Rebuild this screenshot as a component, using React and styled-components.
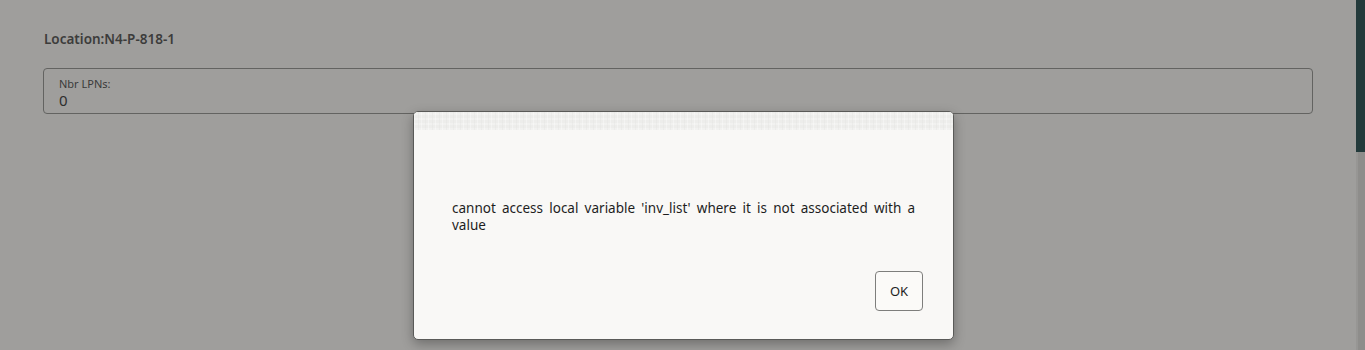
import React from 'react';
import styled, { createGlobalStyle } from 'styled-components';

const GlobalStyle = createGlobalStyle`
  html, body {
    margin: 0;
    padding: 0;
    height: 100%;
    overflow: hidden;
  }
  body {
    background: #9f9e9c;
    font-family: "Noto Sans", "Open Sans", sans-serif;
  }
`;

const Page = styled.div`
  position: relative;
  width: 1365px;
  height: 350px;
  display: flex;
`;

const Content = styled.main`
  flex: 1;
  padding: 30px 43px 0 44px;
  box-sizing: border-box;
`;

const Title = styled.h1`
  margin: 0;
  font-size: 13.5px;
  font-weight: 600;
  line-height: 18px;
  color: #3c3c3b;
`;

const Card = styled.div`
  margin-top: 20px;
  margin-left: -1px;
  height: 46px;
  box-sizing: border-box;
  border: 1px solid #636361;
  border-radius: 4px;
  padding: 8px 15px 0;
  width: 1270px;
`;

const Label = styled.div`
  font-size: 11px;
  line-height: 14px;
  color: #3a3a3a;
`;

const Value = styled.div`
  margin-top: 1px;
  font-size: 15px;
  line-height: 16px;
  color: #2e2e2e;
`;

const Scrollbar = styled.div`
  width: 9px;
  display: flex;
  flex-direction: column;
`;

const Thumb = styled.div`
  height: 152px;
  background: #233a3b;
`;

const Track = styled.div`
  flex: 1;
  background: #8e8d8b;
  border-left: 2px solid #979694;
`;

const Dialog = styled.div`
  position: absolute;
  left: 413px;
  top: 111px;
  width: 541px;
  height: 229px;
  box-sizing: border-box;
  background: #f9f8f6;
  border: 1px solid #5a5a58;
  border-radius: 5px;
  box-shadow: 0 4px 12px rgba(0, 0, 0, 0.3);
  overflow: hidden;
  display: flex;
  flex-direction: column;
`;

const Header = styled.div`
  height: 18px;
  background:
    repeating-linear-gradient(90deg, rgba(255,255,255,0.35) 0 1px, transparent 1px 4px, rgba(225,225,223,0.35) 4px 5px, transparent 5px 7px),
    repeating-linear-gradient(0deg, rgba(255,255,255,0.25) 0 2px, transparent 2px 5px),
    #ededeb;
`;

const Message = styled.p`
  margin: 70px 38px 0 38px;
  font-size: 13.5px;
  line-height: 17px;
  color: #1e1e1e;
  text-align: justify;
`;

const Footer = styled.div`
  margin-top: auto;
  display: flex;
  justify-content: flex-end;
  padding: 0 30px 28px 0;
`;

const Button = styled.button`
  width: 48px;
  height: 40px;
  background: #fbfaf8;
  border: 1px solid #7e7e7c;
  border-radius: 4px;
  font-family: "Noto Sans", "Open Sans", sans-serif;
  font-size: 13px;
  color: #1e1e1e;
  padding: 0;
`;

export default function App() {
  return (
    <>
      <GlobalStyle />
      <Page>
        <Content>
          <Title>Location:N4-P-818-1</Title>
          <Card>
            <Label>Nbr LPNs:</Label>
            <Value>0</Value>
          </Card>
        </Content>
        <Scrollbar>
          <Thumb />
          <Track />
        </Scrollbar>
        <Dialog role="dialog">
          <Header />
          <Message>cannot access local variable 'inv_list' where it is not associated with a value</Message>
          <Footer>
            <Button type="button">OK</Button>
          </Footer>
        </Dialog>
      </Page>
    </>
  );
}
